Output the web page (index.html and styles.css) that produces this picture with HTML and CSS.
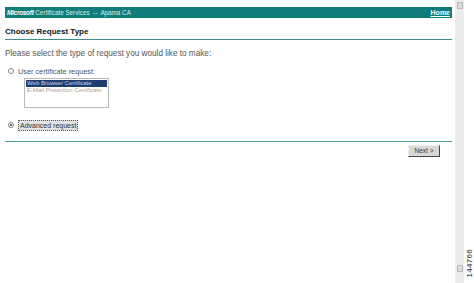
FILE: index.html
```html
<!DOCTYPE html>
<html>
<head>
<meta charset="utf-8">
<link rel="stylesheet" href="styles.css">
</head>
<body>
<div class="page">
  <div class="main">
    <div class="header">
      <div class="brand"><span class="ms">Microsoft</span> Certificate Services &nbsp;--&nbsp; Apama CA</div>
      <a class="home">Home</a>
    </div>
    <div class="title">Choose Request Type</div>
    <div class="intro">Please select the type of request you would like to make:</div>
    <div class="opt">
      <span class="radio"></span>
      <span class="lbl">User certificate request:</span>
    </div>
    <div class="list">
      <div class="item sel">Web Browser Certificate</div>
      <div class="item">E-Mail Protection Certificate</div>
    </div>
    <div class="opt adv">
      <span class="radio on"></span>
      <span class="lbl focus">Advanced request</span>
    </div>
    <div class="rule"></div>
    <div class="actions"><span class="btn">Next &gt;</span></div>
  </div>
  <div class="scroll">
    <span class="arrow"></span>
    <span class="arrow"></span>
  </div>
  <div class="tagcol"><span class="tag">144766</span></div>
</div>
</body>
</html>
```

FILE: styles.css
```css
html, body { margin: 0; padding: 0; background: #fff; }
body { font-family: "Liberation Sans", Arial, sans-serif; font-size: 7px; color: #444; }
.page { display: flex; height: 283px; width: 474px; }
.main { width: 455px; box-sizing: border-box; padding: 7px 3px 0 5px; }
.header { height: 11px; background: #0f7d7a; display: flex; align-items: center; justify-content: space-between; padding: 0 2px 0 2px; }
.brand { font-size: 6.3px; line-height: 11px; color: #d8eeec; white-space: nowrap; }
.ms { font-weight: bold; font-style: italic; color: #fff; letter-spacing: -0.2px; }
.home { font-weight: bold; text-decoration: underline; color: #fff; font-size: 7px; }
.title { font-weight: bold; font-size: 8px; color: #111; margin-top: 9px; line-height: 10px; padding-bottom: 2px; border-bottom: 1.5px solid #3f8f88; }
.intro { margin-top: 9px; font-size: 8.2px; line-height: 9px; color: #555; }
.opt { display: flex; align-items: center; margin-top: 8px; margin-left: 3px; height: 10px; }
.radio { width: 4px; height: 4px; border: 1px solid #888; border-radius: 50%; margin-right: 4px; box-sizing: content-box; position: relative; }
.radio.on::after { content: ""; position: absolute; left: 1px; top: 1px; width: 2px; height: 2px; border-radius: 50%; background: #333; }
.lbl { font-size: 7.3px; color: #555; line-height: 9px; white-space: nowrap; }
.list { margin-left: 19px; margin-top: 2px; width: 85px; height: 30px; border: 1px solid #b8b8b8; box-sizing: border-box; padding: 1px; }
.item { font-size: 6px; line-height: 7px; color: #b0a090; padding-left: 1px; white-space: nowrap; overflow: hidden; }
.item.sel { background: #1e3e72; color: #c8d4ea; }
.adv { margin-top: 12px; margin-left: 3px; }
.focus { background: #e2e2e2; border: 1px dotted #555; padding: 0 1px; color: #333; font-size: 7px; }
.rule { margin-top: 11px; border-top: 1.5px solid #4e9b92; }
.actions { display: flex; justify-content: flex-end; margin-top: 3px; padding-right: 12px; }
.btn { width: 30px; height: 10px; background: #d8d8d8; border: 1px solid; border-color: #eee #444 #444 #eee; font-size: 6.5px; line-height: 10px; text-align: center; color: #333; }
.scroll { width: 9px; background: #ececec; display: flex; flex-direction: column; justify-content: space-between; align-items: center; padding: 2px 0 11px; box-sizing: border-box; }
.arrow { width: 6px; height: 7px; background: #dcdcdc; border: 1px solid #bbb; box-sizing: border-box; }
.tagcol { flex: 1; display: flex; align-items: flex-end; justify-content: center; padding-bottom: 6px; }
.tag { writing-mode: vertical-rl; transform: rotate(180deg); font-size: 8px; color: #222; letter-spacing: 0.3px; }
```
